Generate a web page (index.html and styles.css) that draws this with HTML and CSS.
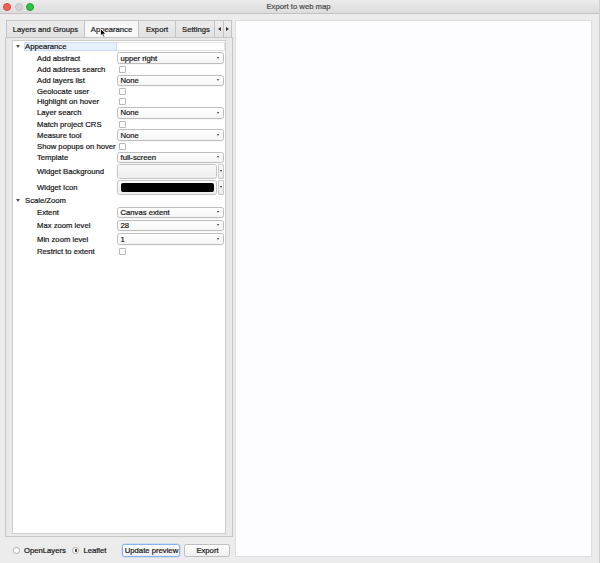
FILE: index.html
```html
<!DOCTYPE html>
<html lang="en">
<head>
    <meta charset="UTF-8">
    <title>Export to web map</title>
    <link rel="stylesheet" href="styles.css">
</head>
<body>

    <div class="window">
        <div class="titlebar">
            <div class="lights">
                <span class="light red"></span>
                <span class="light grey"></span>
                <span class="light green"></span>
            </div>
            <div class="title">Export to web map</div>
            <div></div>
        </div>

        <div class="main">
            <div class="side">
                <div class="tabs">
                    <div class="tab tab-layers">Layers and Groups</div>
                    <div class="tab tab-appearance active">
                        Appearance
                        <svg class="cursor" width="7" height="10" viewBox="0 0 7 10">
                            <path d="M0.5 0.5 L0.5 8 L2.3 6.3 L3.6 9.3 L4.8 8.8 L3.6 5.9 L6 5.9 Z" fill="#000" stroke="#fff" stroke-width="0.8"/>
                        </svg>
                    </div>
                    <div class="tab tab-export">Export</div>
                    <div class="tab tab-settings">Settings</div>
                    <div class="tab-arrow arrow-left"><i></i></div>
                    <div class="tab-arrow arrow-right"><i></i></div>
                </div>

                <div class="pane">
                    <div class="tree">
                        <div class="row row-head current">
                            <div class="label head-label"><i class="caret"></i><span class="head-text">Appearance</span></div>
                            <div class="value"><span class="focus-box"></span></div>
                        </div>
                        <div class="row row-combo">
                            <div class="label">Add abstract</div>
                            <div class="value"><div class="combo"><span>upper right</span><i class="drop"></i></div></div>
                        </div>
                        <div class="row row-check">
                            <div class="label">Add address search</div>
                            <div class="value"><span class="check"></span></div>
                        </div>
                        <div class="row row-combo">
                            <div class="label">Add layers list</div>
                            <div class="value"><div class="combo"><span>None</span><i class="drop"></i></div></div>
                        </div>
                        <div class="row row-check">
                            <div class="label">Geolocate user</div>
                            <div class="value"><span class="check"></span></div>
                        </div>
                        <div class="row row-check">
                            <div class="label">Highlight on hover</div>
                            <div class="value"><span class="check"></span></div>
                        </div>
                        <div class="row row-combo">
                            <div class="label">Layer search</div>
                            <div class="value"><div class="combo"><span>None</span><i class="drop"></i></div></div>
                        </div>
                        <div class="row row-check">
                            <div class="label">Match project CRS</div>
                            <div class="value"><span class="check"></span></div>
                        </div>
                        <div class="row row-combo">
                            <div class="label">Measure tool</div>
                            <div class="value"><div class="combo"><span>None</span><i class="drop"></i></div></div>
                        </div>
                        <div class="row row-check">
                            <div class="label">Show popups on hover</div>
                            <div class="value"><span class="check"></span></div>
                        </div>
                        <div class="row row-combo">
                            <div class="label">Template</div>
                            <div class="value"><div class="combo"><span>full-screen</span><i class="drop"></i></div></div>
                        </div>
                        <div class="row row-color">
                            <div class="label">Widget Background</div>
                            <div class="value">
                                <div class="color-btn"><span class="swatch"></span></div>
                                <div class="color-drop"><i class="drop"></i></div>
                            </div>
                        </div>
                        <div class="row row-color">
                            <div class="label">Widget Icon</div>
                            <div class="value">
                                <div class="color-btn"><span class="swatch black"></span></div>
                                <div class="color-drop"><i class="drop"></i></div>
                            </div>
                        </div>
                        <div class="row row-head">
                            <div class="label head-label"><i class="caret"></i><span class="head-text">Scale/Zoom</span></div>
                            <div class="value"></div>
                        </div>
                        <div class="row row-combo">
                            <div class="label">Extent</div>
                            <div class="value"><div class="combo"><span>Canvas extent</span><i class="drop"></i></div></div>
                        </div>
                        <div class="row row-spin">
                            <div class="label">Max zoom level</div>
                            <div class="value"><div class="combo"><span>28</span><i class="drop"></i></div></div>
                        </div>
                        <div class="row row-spin">
                            <div class="label">Min zoom level</div>
                            <div class="value"><div class="combo"><span>1</span><i class="drop"></i></div></div>
                        </div>
                        <div class="row row-check">
                            <div class="label">Restrict to extent</div>
                            <div class="value"><span class="check"></span></div>
                        </div>
                    </div>
                </div>

                <div class="bottom">
                    <label class="radio-opt first"><span class="radio"></span>OpenLayers</label>
                    <label class="radio-opt"><span class="radio on"></span>Leaflet</label>
                    <button type="button" class="btn btn-update">Update preview</button>
                    <button type="button" class="btn btn-export">Export</button>
                </div>
            </div>

            <div class="preview"></div>
        </div>
    </div>

</body>
</html>
```

FILE: styles.css
```css
* {
    box-sizing: border-box;
}

body {
    margin: 0;
    font-family: "Liberation Sans", Arial, sans-serif;
    font-size: 7.7px;
    color: #141414;
    -webkit-text-stroke: 0.2px;
    background-color: #ececec;
}

.window {
    width: 600px;
    height: 563px;
    display: flex;
    flex-direction: column;
    background-color: #ececec;
    border-right: 1px solid #cfcfcf;
}

/* title bar */
.titlebar {
    height: 14px;
    display: grid;
    grid-template-columns: 1fr auto 1fr;
    align-items: center;
    background: linear-gradient(#ebebeb, #dcdcdc);
    border-bottom: 1px solid #c2c2c2;
}

.lights {
    display: flex;
    gap: 3.3px;
    padding-left: 3.3px;
}

.light {
    width: 8px;
    height: 8px;
    border-radius: 50%;
}

.light.red {
    background-color: #f25f58;
    border: 0.5px solid #d9473f;
}

.light.grey {
    background-color: #d4d4d4;
    border: 0.5px solid #c2c2c2;
}

.light.green {
    background-color: #2fc23f;
    border: 0.5px solid #20a22d;
}

.title {
    color: #4a4a4a;
    padding-right: 2px;
}

/* main area */
.main {
    flex: 1;
    display: flex;
    gap: 2px;
    padding: 6px 7px 6px 5px;
}

.side {
    width: 228px;
    display: flex;
    flex-direction: column;
}

.tabs {
    height: 17px;
    display: flex;
    padding-left: 1px;
}

.tab {
    position: relative;
    height: 17px;
    display: flex;
    align-items: center;
    justify-content: center;
    white-space: nowrap;
    overflow: hidden;
    color: #1a1a1a;
    background: linear-gradient(#ececec, #e1e1e1);
    border: 1px solid #c3c3c3;
    border-left: none;
    border-bottom: none;
}

.tab-layers {
    width: 79px;
    border-left: 1px solid #c3c3c3;
}

.tab-appearance {
    width: 54px;
}

.tab-export {
    width: 37px;
}

.tab-settings {
    width: 39px;
    justify-content: flex-start;
    padding-left: 6px;
}

.tab.active {
    background: #f7f7f7;
}

.cursor {
    position: absolute;
    left: 15px;
    top: 7px;
}

.tab-arrow {
    height: 17px;
    display: flex;
    align-items: center;
    justify-content: center;
    background: linear-gradient(#efefef, #e3e3e3);
    border: 1px solid #c3c3c3;
    border-left: none;
    border-bottom: none;
}

.arrow-left {
    width: 9px;
}

.arrow-right {
    width: 8px;
}

.arrow-left i {
    border-top: 2.5px solid transparent;
    border-bottom: 2.5px solid transparent;
    border-right: 3px solid #333;
}

.arrow-right i {
    border-top: 2.5px solid transparent;
    border-bottom: 2.5px solid transparent;
    border-left: 3px solid #333;
}

.pane {
    flex: 1;
    padding: 2px 6px;
    background-color: #e9e9e9;
    border: 1px solid #c6c6c6;
}

.tree {
    height: 100%;
    background-color: #fff;
    border: 1px solid #cdcdcd;
}

/* tree rows */
.row {
    display: flex;
    align-items: center;
}

.row-head {
    height: 11px;
}

.row-combo {
    height: 12px;
}

.row-check {
    height: 10.3px;
}

.row-color {
    height: 16px;
}

.row-spin {
    height: 13.8px;
}

.label {
    width: 104px;
    padding-left: 24px;
    white-space: nowrap;
}

.head-label {
    display: flex;
    align-items: center;
    padding-left: 2px;
}

.caret {
    width: 0;
    height: 0;
    margin-left: 0.5px;
    margin-right: 4px;
    border-left: 2.2px solid transparent;
    border-right: 2.2px solid transparent;
    border-top: 3px solid #555;
}

.head-text {
    flex: 1;
    height: 9px;
    line-height: 8px;
    padding-left: 0.5px;
    border: 1px solid transparent;
}

.current .head-text {
    background-color: #e6effc;
    border-color: #cddcf3;
}

.value {
    flex: 1;
    display: flex;
    align-items: center;
}

.focus-box {
    width: 108px;
    height: 9px;
    border: 1px solid #e4e4e4;
    border-left: none;
}

.combo {
    width: 107px;
    height: 11.5px;
    display: flex;
    align-items: center;
    justify-content: space-between;
    padding: 0 4px 0 2.5px;
    background: linear-gradient(#fff, #f5f5f5);
    border: 1px solid #bdbdbd;
    border-radius: 2.5px;
    box-shadow: 0 0.5px 0 rgba(0, 0, 0, 0.06);
}

.drop {
    width: 0;
    height: 0;
    border-left: 1.8px solid transparent;
    border-right: 1.8px solid transparent;
    border-top: 2.2px solid #333;
}

.check {
    width: 7px;
    height: 7px;
    margin-left: 2px;
    background-color: #fff;
    border: 1px solid #b8b8b8;
    border-radius: 1px;
}

.color-btn {
    width: 100px;
    height: 15px;
    padding: 2px 2.5px;
    background: linear-gradient(#f8f8f8, #efefef);
    border: 1px solid #c4c4c4;
    border-radius: 2.5px;
}

.swatch {
    display: block;
    height: 100%;
}

.swatch.black {
    background-color: #000;
    border-radius: 2px;
}

.color-drop {
    width: 6px;
    height: 15px;
    margin-left: 1px;
    display: flex;
    align-items: center;
    justify-content: center;
    background: linear-gradient(#f8f8f8, #ececec);
    border: 1px solid #c9c9c9;
    border-radius: 1px;
}

/* bottom bar */
.bottom {
    height: 20px;
    display: flex;
    align-items: flex-end;
}

.radio-opt {
    height: 13px;
    display: flex;
    align-items: center;
    gap: 4px;
    margin-left: 6.5px;
}

.radio-opt.first {
    margin-left: 8px;
}

.radio {
    width: 7px;
    height: 7px;
    border-radius: 50%;
    display: flex;
    align-items: center;
    justify-content: center;
    background-color: #fff;
    border: 1px solid #adadad;
}

.radio.on::after {
    content: "";
    width: 2.5px;
    height: 2.5px;
    border-radius: 50%;
    background-color: #222;
}

.btn {
    height: 13px;
    padding: 0;
    font-family: inherit;
    font-size: 7.7px;
    color: #141414;
    -webkit-text-stroke: 0.2px;
    background: linear-gradient(#fdfdfd, #f0f0f0);
    border: 1px solid #bfbfbf;
    border-radius: 2.5px;
}

.btn-update {
    width: 58px;
    margin-left: 16px;
    border-color: #86b1ec;
    box-shadow: 0 0 0 0.5px #b7d0f4;
}

.btn-export {
    width: 46px;
    margin-left: 4px;
}

.preview {
    flex: 1;
    background-color: #fdfcfe;
    border: 1px solid #dedede;
}
```
